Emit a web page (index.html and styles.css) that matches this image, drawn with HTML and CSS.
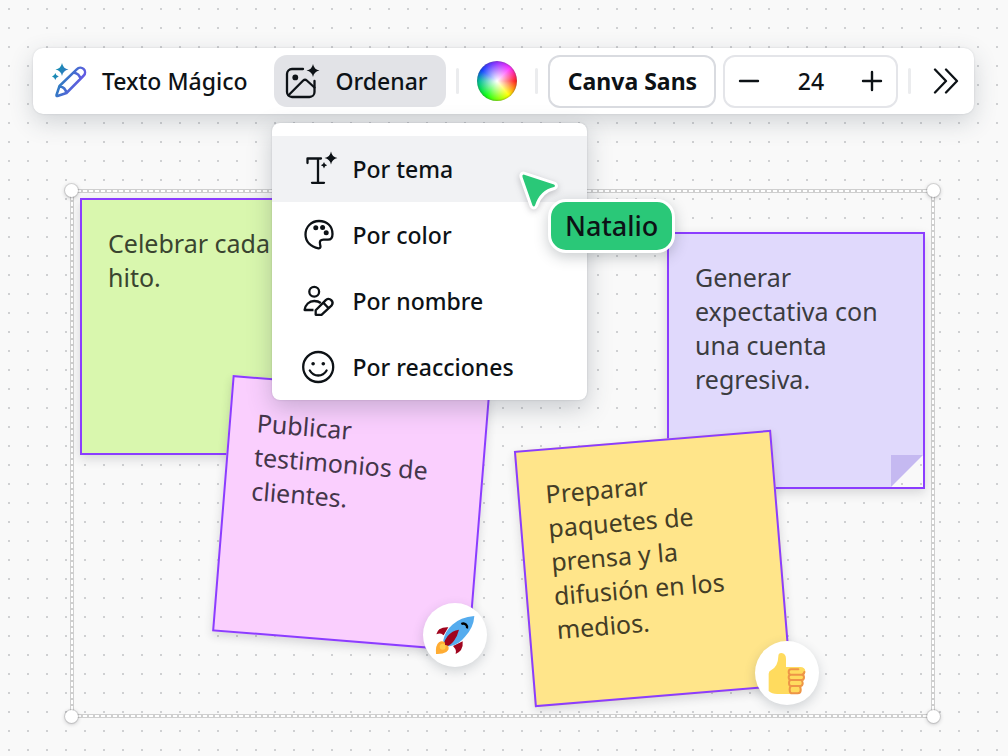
FILE: index.html
```html
<!DOCTYPE html>
<html lang="es">
  <head>
    <meta charset="utf-8" />
    <meta name="viewport" content="width=device-width" />

    <title>Pizarra</title>
    <link rel="stylesheet" href="styles.css">
  </head>
  <body>
    <header class="toolbar">
      <button class="tool" type="button">
        <svg class="tool-icon" viewBox="0 0 36 36" fill="none">
          <defs>
            <linearGradient id="magic" gradientUnits="userSpaceOnUse" x1="2" y1="10" x2="28" y2="24">
              <stop offset="0" stop-color="#138eb0" />
              <stop offset="1" stop-color="#6757e5" />
            </linearGradient>
          </defs>
          <path d="M10 0q1 5.500 6.500 6.500-5.500 1-6.500 6.500-1-5.500-6.500-6.500Q9 5.500 10 0zM3.300 10q.6 2.900 3.500 3.500-2.900.6-3.500 3.500-.6-2.900-3.500-3.500 2.900-.6 3.500-3.500z" fill="url(#magic)" />
          <path d="M25 6.200a4.400 4.400 0 0 1 6.800 6.300L14.500 30 5.500 33q-1.300.3-1-1l3-9zM7.800 23.500q5.700.8 6.500 6.500M21.500 9.500q6 1 7 6.700" stroke="url(#magic)" stroke-width="2.500" stroke-linejoin="round" />
        </svg>
        Texto Mágico
      </button>

      <div class="dropdown">
        <button class="tool tool-active" type="button" aria-haspopup="menu" aria-expanded="true">
          <svg class="tool-icon" viewBox="0 0 36 36" fill="none" stroke="currentColor" stroke-width="2.300" stroke-linecap="round" stroke-linejoin="round">
            <path d="M18 6H7a5 5 0 0 0-5 5v18a5 5 0 0 0 5 5h17.500a5 5 0 0 0 5-5V18" />
            <path d="M3.500 32.300 18.200 17.500q1.800-1.600 3.600 0l7.700 7" />
            <circle cx="10.300" cy="14.400" r="2.900" fill="currentColor" stroke="none" />
            <path d="M28 1q1 5.500 6.500 6.500-5.500 1-6.500 6.500-1-5.500-6.500-6.500Q27 6.500 28 1z" fill="currentColor" stroke="none" />
          </svg>
          Ordenar
        </button>
        <ul class="menu" role="menu">
          <li role="none">
            <button class="menu-item menu-item-active" type="button" role="menuitem">
              <svg class="menu-icon" viewBox="0 0 36 36" fill="none" stroke="currentColor" stroke-width="2.300" stroke-linecap="round" stroke-linejoin="round">
                <path d="M5.500 12V7.500H19M16 7.500v24.300M10 31.800h12" />
                <path d="M29 .5q1 5.500 6.500 6.500-5.500 1-6.500 6.500-1-5.500-6.500-6.500Q28 6 29 .5zM22 11q.5 2.600 3.200 3.200-2.700.6-3.200 3.200-.5-2.600-3.200-3.200 2.700-.6 3.200-3.200z" fill="currentColor" stroke="none" />
              </svg>
              Por tema
            </button>
          </li>
          <li role="none">
            <button class="menu-item" type="button" role="menuitem">
              <svg class="menu-icon" viewBox="0 0 36 36" fill="none" stroke="currentColor" stroke-width="2.300" stroke-linejoin="round">
                <path d="M30.500 17C30.500 9 25 4 17 4S3.500 10 3.500 17.500c0 7 5 12.500 13 13.800 2 .2 2.400-1.300 1.600-3.600-.9-3.800.5-5 3.400-5h4.500c3.200 0 4.500-2.200 4.500-5.700z" />
                <g fill="currentColor" stroke="none">
                  <circle cx="13.800" cy="10.800" r="2.500" />
                  <circle cx="20.600" cy="10.600" r="2.500" />
                  <circle cx="24.200" cy="15.800" r="2.500" />
                </g>
              </svg>
              Por color
            </button>
          </li>
          <li role="none">
            <button class="menu-item" type="button" role="menuitem">
              <svg class="menu-icon" viewBox="0 0 36 36" fill="none" stroke="currentColor" stroke-width="2.300" stroke-linejoin="round">
                <circle cx="12.200" cy="8.800" r="4.900" />
                <path d="M11.500 27H2.600c.6-5.400 4.600-9 9.600-9 2.800 0 4.900.7 6.600 2" />
                <path d="M13.700 31.800v-4.600L24 16.900a4 4 0 0 1 5.700 5.500l-10.200 9.400zM21.300 19.600l4.800 5.200" />
              </svg>
              Por nombre
            </button>
          </li>
          <li role="none">
            <button class="menu-item" type="button" role="menuitem">
              <svg class="menu-icon" viewBox="0 0 36 36" fill="none" stroke="currentColor" stroke-width="2.300" stroke-linecap="round">
                <circle cx="16.200" cy="18" r="15" />
                <path d="M7.800 21.500q3 5 8.400 5t8.400-5" />
                <circle cx="11.100" cy="14.700" r="1.800" fill="currentColor" stroke="none" />
                <circle cx="21.300" cy="14.700" r="1.800" fill="currentColor" stroke="none" />
              </svg>
              Por reacciones
            </button>
          </li>
        </ul>
      </div>

      <span class="divider"></span>
      <button class="color-button" type="button" aria-label="Color"><span class="color-wheel"></span></button>
      <span class="divider"></span>

      <div class="font-controls">
        <button class="font-button" type="button">Canva Sans</button>
        <div class="stepper">
          <button class="step" type="button" aria-label="Reducir">
            <svg viewBox="0 0 22 22" stroke="currentColor" stroke-width="2.400" stroke-linecap="round"><path d="M2 11h18" /></svg>
          </button>
          <input class="size-input" type="text" value="24" aria-label="Tamaño de fuente">
          <button class="step" type="button" aria-label="Aumentar">
            <svg viewBox="0 0 22 22" stroke="currentColor" stroke-width="2.400" stroke-linecap="round"><path d="M2 11h18M11 2v18" /></svg>
          </button>
        </div>
      </div>

      <span class="divider"></span>
      <button class="more-button" type="button" aria-label="Más">
        <svg viewBox="0 0 26 26" fill="none" stroke="currentColor" stroke-width="2.300" stroke-linecap="round" stroke-linejoin="round">
          <path d="M2 1.500 13 13 2 24.500M13 1.500 24 13 13 24.500" />
        </svg>
      </button>
    </header>

    <main class="board">
      <div class="selection">
        <span class="handle handle-tl"></span>
        <span class="handle handle-tr"></span>
        <span class="handle handle-bl"></span>
        <span class="handle handle-br"></span>
      </div>

      <p class="note note-green">Celebrar cada hito.</p>
      <p class="note note-purple">Generar expectativa con una cuenta regresiva.</p>
      <p class="note note-pink">Publicar testimonios de clientes.</p>
      <p class="note note-yellow">Preparar paquetes de prensa y la difusión en los medios.</p>

      <span class="reaction reaction-rocket">
        <svg viewBox="0 0 120 120" width="40" height="40">
          <path d="M40 37Q24 36 13 43q-6 5-9 15 8-4 15-2l7 5zM83 79q2 15-5 26-6 8-16 12 3-8-1-15l-7-9z" fill="#a0041e" />
          <path d="M118 3Q76 7 52 29 30 48 25 76q-1 10 5 16 8 3 17 1 26-6 43-28Q116 38 118 3z" fill="#55acee" />
          <path d="M72 44Q51 47 38 63 28 76 25 89q2 6 8 5 14-3 24-17 10-13 15-33z" fill="#a0041e" />
          <path d="M3 117q-2-27 9-35 8-7 17 0 2 3 1 8 6 0 9 3 6 10-5 18-11 7-31 6z" fill="#ffac33" />
          <circle cx="23" cy="95" r="9" fill="#ffcc4d" />
          <path d="M79 27q8-4 14 2 5 5 3 11" fill="none" stroke="#000" stroke-width="7" />
        </svg>
      </span>
      <span class="reaction reaction-thumb">
        <svg viewBox="0 0 120 129" width="40" height="43">
          <path d="M34 13q0-10 9-10 14 1 14 18v24h42q16 0 16 14 0 7-5 11 5 11-2 18 3 11-5 16 3 22-15 22H31q-17 0-26-9V65q0-7 8-11Q33 44 34 13z" fill="#ffdb5e" />
          <path d="M94 52H72q-7 0-7 8t7 8h32q7 0 7 8t-7 8H72q-7 0-7-8t7-8M72 84q-6 0-6 9t6 9h28q7 0 7-8 0-7-5-10M74 102q-6 0-6 11t8 11h16q9 0 9-10 0-9-4-12M104 68q7-1 8-8" fill="none" stroke="#ee9547" stroke-width="6" stroke-linecap="round" />
        </svg>
      </span>

      <div class="collaborator">
        <svg class="pointer" viewBox="0 0 42 42">
          <path d="M5.500 4.500 36 14.500q2 1.500 0 2.500-14 3-19 18.500-1 2-2.500 0L4.500 7q-.6-2.300 1-2.500z" fill="#2ac878" stroke="#fff" stroke-width="6" stroke-linejoin="round" paint-order="stroke" />
        </svg>
        <span class="collaborator-name">Natalio</span>
      </div>
    </main>
  </body>
</html>
```

FILE: styles.css
```css
* {
  box-sizing: border-box;
}
body {
  margin: 0;
  padding-top: 48px;
  min-height: 100vh;
  font: 500 23px/34px "Noto Sans", sans-serif;
  color: #0d1216;
  background: #f9f9f9 radial-gradient(circle at 9px 9px, #cfd0d2 1px, transparent 1px) 0 0 / 19px 19px;
}
button,
input {
  margin: 0;
  padding: 0;
  border: 0;
  font: inherit;
  color: inherit;
  background: none;
}
svg {
  display: block;
  flex: none;
}

/* Toolbar */
.toolbar {
  position: relative;
  z-index: 2;
  display: flex;
  align-items: center;
  gap: 10px;
  height: 66px;
  margin: 0 34px 0 33px;
  padding-left: 8px;
  border-radius: 10px;
  background: #fff;
  box-shadow: 0 0 2px rgba(40, 50, 60, 0.15), 0 8px 24px rgba(50, 65, 80, 0.2);
}
.tool {
  display: flex;
  align-items: center;
  gap: 14px;
  height: 52px;
  padding: 0 17px 0 11px;
  border-radius: 13px;
  white-space: nowrap;
}
.tool-active {
  width: 172px;
  background: #e2e3e7;
}
.tool-icon {
  width: 36px;
  height: 36px;
}
.dropdown {
  position: relative;
}
.divider {
  flex: none;
  width: 3px;
  height: 26px;
  border-radius: 2px;
  background: #ebecee;
}
.color-button {
  display: flex;
  justify-content: center;
  width: 56px;
}
.color-wheel {
  width: 40px;
  height: 40px;
  border-radius: 50%;
  background:
    radial-gradient(circle closest-side, #fff, rgba(255, 255, 255, 0) 90%, rgba(60, 60, 60, 0.3)),
    conic-gradient(from 90deg, #f22, #ff0 50deg, #1f1 125deg, #0b9 180deg, #14f 215deg, #83f 265deg, #f3f 315deg, #f22);
}
.font-controls {
  display: flex;
  gap: 7px;
}
.font-button {
  width: 168px;
  height: 53px;
  border: 2px solid #d9dbe0;
  border-radius: 12px;
  font-weight: 700;
  white-space: nowrap;
}
.stepper {
  display: flex;
  align-items: center;
  justify-content: space-between;
  width: 175px;
  height: 53px;
  padding: 0 13px;
  border: 2px solid #e4e5e9;
  border-radius: 12px;
}
.step svg {
  width: 22px;
  height: 22px;
}
.size-input {
  width: 60px;
  text-align: center;
}
.more-button {
  padding: 0 12px;
}
.more-button svg {
  width: 26px;
  height: 26px;
}

/* Sort menu */
.menu {
  position: absolute;
  top: 68px;
  left: -2px;
  width: 315px;
  margin: 0;
  padding: 13px 0 0;
  border-radius: 8px;
  list-style: none;
  overflow: hidden;
  background: #fff;
  box-shadow: 0 0 2px rgba(40, 50, 60, 0.2), 0 8px 24px rgba(50, 65, 80, 0.25);
}
.menu-item {
  display: flex;
  align-items: center;
  gap: 14px;
  width: 100%;
  height: 66px;
  padding: 0 30px;
}
.menu-item-active {
  background: #f1f2f4;
}
.menu-icon {
  width: 36px;
  height: 36px;
}

/* Board */
.board {
  position: absolute;
  top: 0;
  left: 0;
}
.selection {
  position: absolute;
  top: 189px;
  left: 70px;
  width: 865px;
  height: 529px;
  border: 1px solid #cfcfcf;
  background:
    repeating-linear-gradient(90deg, #fff 0 4px, #cfcfcf 4px 6px) top / 100% 2px no-repeat,
    repeating-linear-gradient(90deg, #fff 0 4px, #cfcfcf 4px 6px) bottom / 100% 2px no-repeat,
    repeating-linear-gradient(#fff 0 4px, #cfcfcf 4px 6px) left / 2px 100% no-repeat,
    repeating-linear-gradient(#fff 0 4px, #cfcfcf 4px 6px) right / 2px 100% no-repeat;
}
.selection::before {
  content: "";
  position: absolute;
  inset: 2px;
  border: 1px solid #cfcfcf;
}
.handle {
  position: absolute;
  width: 13px;
  height: 13px;
  border-radius: 50%;
  background: #fff;
  box-shadow: 0 0 0 1px rgba(60, 60, 60, 0.15), 0 1px 4px rgba(40, 40, 50, 0.3);
}
.handle-tl,
.handle-tr {
  top: -6px;
}
.handle-bl,
.handle-br {
  bottom: -6px;
}
.handle-tl,
.handle-bl {
  left: -6px;
}
.handle-tr,
.handle-br {
  right: -6px;
}
.note {
  position: absolute;
  width: 258px;
  height: 257px;
  margin: 0;
  padding: 26px;
  border: 2px solid #8b3dff;
  font-size: 25px;
  font-weight: 400;
  color: #3b3c40;
  box-shadow: 0 4px 10px rgba(40, 40, 50, 0.16);
}
.note-green {
  top: 198px;
  left: 80px;
  color: #3a4430;
  background: #d9f7ae;
}
.note-purple {
  top: 232px;
  left: 667px;
  background: linear-gradient(315deg, transparent 23px, #e0d9fc 23px);
}
.note-purple::after {
  content: "";
  position: absolute;
  right: 0;
  bottom: 0;
  width: 32px;
  height: 32px;
  background: #c5b9f1;
  clip-path: polygon(0 0, 100% 0, 0 100%);
}
.note-pink {
  top: 385px;
  left: 222px;
  color: #44364a;
  background: #facffe;
  transform: rotate(4.6deg);
}
.note-yellow {
  top: 440px;
  left: 524px;
  color: #443d26;
  background: #ffe58a;
  transform: rotate(-4.7deg);
}
.reaction {
  position: absolute;
  display: flex;
  align-items: center;
  justify-content: center;
  width: 64px;
  height: 64px;
  border-radius: 50%;
  background: #fff;
  box-shadow: 0 4px 12px rgba(50, 65, 80, 0.2);
}
.reaction-rocket {
  top: 603px;
  left: 423px;
}
.reaction-thumb {
  top: 641px;
  left: 755px;
}

/* Live cursor of another person on the board */
.collaborator {
  position: absolute;
  z-index: 3;
  top: 170px;
  left: 518px;
  padding: 29px 0 0 30px;
}
.pointer {
  position: absolute;
  top: 0;
  left: 0;
  width: 42px;
  height: 42px;
  filter: drop-shadow(0 2px 3px rgba(40, 40, 50, 0.25));
}
.collaborator-name {
  display: block;
  padding: 7px 14px;
  border: 3px solid #fff;
  border-radius: 18px;
  font-size: 27px;
  background: #2ac878;
  box-shadow: 0 4px 14px rgba(40, 50, 60, 0.25);
}
```
